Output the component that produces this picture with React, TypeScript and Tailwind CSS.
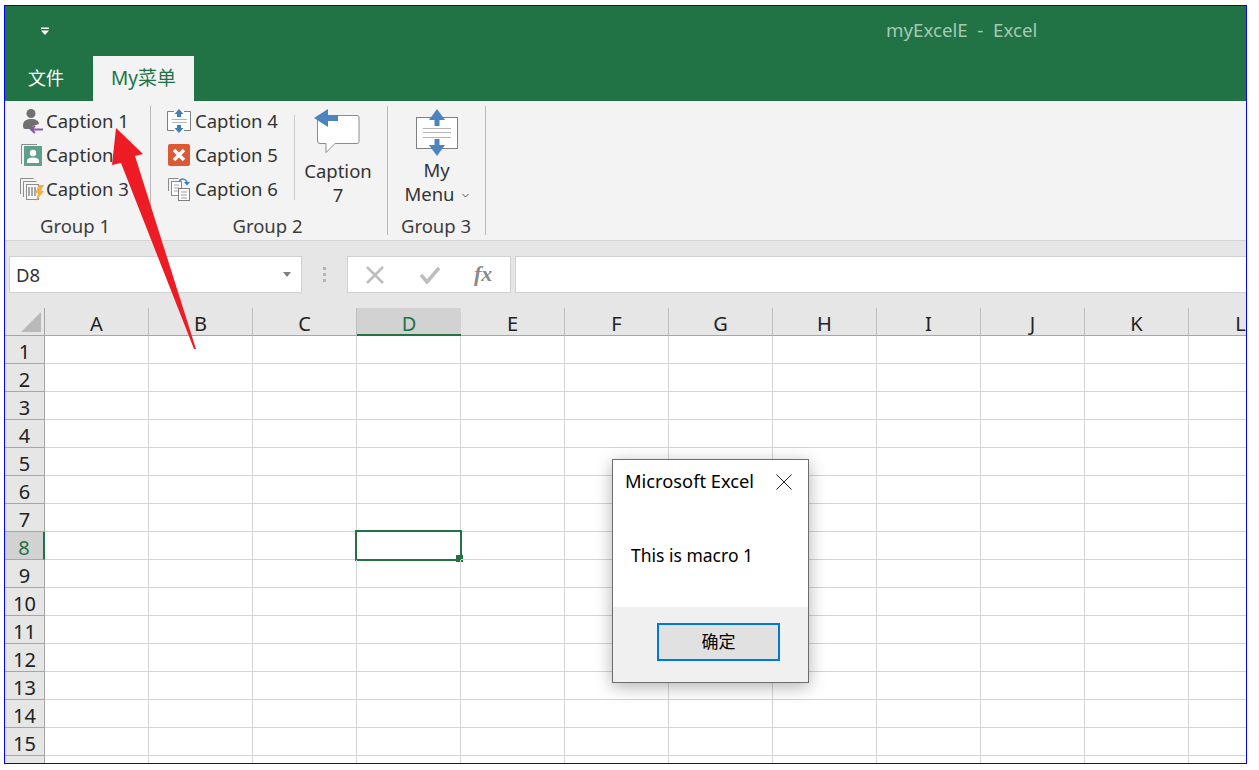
const uiFont = "font-['Noto_Sans','Noto_Sans_CJK_SC',sans-serif]";
const cols = ["A", "B", "C", "D", "E", "F", "G", "H", "I", "J", "K", "L"];
const rows = Array.from({ length: 16 }, (_, i) => i + 1);

function IconPerson() {
  return (
    <svg width="24" height="26" viewBox="0 0 24 26">
      <circle cx="11" cy="5.500" r="4.500" fill="#707070" />
      <path d="M3 18c0-5 3-7 8-7s8 2 8 5l-6 2-1 3H5c-1 0-2-1-2-3z" fill="#707070" />
      <path d="M11 21.500h12M15 18l-4 3.500 4 3.500" fill="none" stroke="#8a5aa8" strokeWidth="2" />
    </svg>
  );
}

function IconContact() {
  return (
    <svg width="24" height="24" viewBox="0 0 24 24">
      <path d="M1.500 21V1.500H17" fill="none" stroke="#8c8c8c" />
      <rect x="4" y="3" width="18" height="20" fill="#5f9f8b" />
      <circle cx="13" cy="10" r="3.200" fill="#fff" />
      <path d="M7 20v-2c0-2 2-3.500 6-3.500s6 1.500 6 3.500v2z" fill="#fff" />
    </svg>
  );
}

function IconBolt() {
  return (
    <svg width="26" height="26" viewBox="0 0 26 26">
      <path d="M1.500 18V2.500h13M4.500 21V5.500h13" fill="none" stroke="#8c8c8c" />
      <rect x="7.500" y="8.500" width="12" height="15" fill="#f7f7f7" stroke="#8c8c8c" />
      <path d="M10 11v9M13 11v9M16 11v9" stroke="#a8a8a8" strokeWidth="2" />
      <path d="M20 9h5l-3 6h3l-8 10 2-8h-3z" fill="#f0b14a" />
    </svg>
  );
}

function IconSpacing() {
  return (
    <svg width="26" height="26" viewBox="0 0 26 26">
      <rect x="2" y="3" width="22" height="19" fill="#fff" />
      <path d="M8 3.500H1.500v19H8M18 3.500h6.500v19H18" fill="none" stroke="#7f7f7f" />
      <path d="M6 11.500h15M6 14.500h15" stroke="#b5b5b5" />
      <path d="M13 1L8.500 6H11v3h4V6h2.500z" fill="#3f7fba" />
      <path d="M13 25l-4.500-5H11v-3h4v3h2.500z" fill="#3f7fba" />
    </svg>
  );
}

function IconClose() {
  return (
    <svg width="22" height="22" viewBox="0 0 22 22">
      <rect width="22" height="22" rx="2" fill="#dc5a33" />
      <path d="M6 6l10 10M16 6L6 16" stroke="#fff" strokeWidth="3.500" />
    </svg>
  );
}

function IconPages() {
  return (
    <svg width="24" height="24" viewBox="0 0 24 24">
      <path d="M1.500 14V1.500h10" fill="none" stroke="#8c8c8c" />
      <rect x="4.500" y="4.500" width="10" height="14" fill="#fff" stroke="#8c8c8c" />
      <path d="M7 8h5M7 11h5M7 14h5" stroke="#a8a8a8" />
      <rect x="11.500" y="11.500" width="11" height="12" fill="#fff" stroke="#7f7f7f" />
      <path d="M14 15h6M14 18h6M14 21h6" stroke="#9a9a9a" />
      <path d="M12 5c2-4 7-4 8 1" fill="none" stroke="#3f7fba" strokeWidth="1.500" />
      <path d="M17 5l3 3.500L23 5z" fill="#3f7fba" />
    </svg>
  );
}

function IconComment() {
  return (
    <svg width="48" height="46" viewBox="0 0 48 46">
      <path d="M4.500 10Q4.500 7.500 7 7.500H44q2 0 2 2v24q0 2-2 2H22l-9 9v-9H7q-2.500 0-2.500-2.500z" fill="#fff" stroke="#8c8c8c" />
      <path d="M1 10L15 1v6h10v6H15v6z" fill="#4b84bf" />
    </svg>
  );
}

function IconMenu() {
  return (
    <svg width="44" height="48" viewBox="0 0 44 48">
      <rect x="1.500" y="8.500" width="41" height="31" fill="#fff" stroke="#7f7f7f" />
      <path d="M8 19.500h28M8 23.500h28M8 28.500h28" stroke="#b5b5b5" />
      <path d="M22 0l-8 11h5.500v6h5v-6H30z" fill="#4b84bf" />
      <path d="M22 47l-8-11h5.500v-6h5v6H30z" fill="#4b84bf" />
    </svg>
  );
}

function SmallButton({ icon, label, iconBox }: { icon: React.ReactNode; label: string; iconBox: string }) {
  return (
    <div className="flex h-[30px] items-center">
      <div className={`flex items-center justify-center ${iconBox}`}>{icon}</div>
      <span className="text-[18.500px] leading-none whitespace-nowrap text-[#333]">{label}</span>
    </div>
  );
}

export default function App() {
  return (
    <div className={`relative h-[770px] w-[1259px] overflow-hidden bg-white pt-[5px] pl-[4px] ${uiFont}`}>
      <div className="flex h-[759px] w-[1243px] flex-col overflow-hidden border border-[#0000ff]">
        {/* title bar */}
        <div className="h-[95px] shrink-0 bg-[#217346]">
          <div className="flex h-[50px]">
            <svg className="mt-[21px] ml-[36px]" width="8" height="8" viewBox="0 0 8 8">
              <path d="M0 .5h8V2H0zM0 3.500h8L4 8z" fill="#fff" />
            </svg>
            <div className="ml-[837px] pt-[10px] text-[18.700px] leading-[28px] whitespace-pre text-[#a5c9b4]">myExcelE  -  Excel</div>
          </div>
          <div className="flex h-[45px]">
            <div className="flex w-[88px] items-center justify-center pr-[6px] text-[18px] text-white">文件</div>
            <div className="flex w-[101px] items-center justify-center bg-[#f3f3f3] text-[19px] text-[#217346]">My菜单</div>
          </div>
        </div>

        {/* ribbon */}
        <div className="flex h-[140px] shrink-0 border-b border-[#d4d4d4] bg-[#f3f3f3] pt-[5px]">
          <div className="flex h-[129px] w-[146px] flex-col border-r border-[#b8b8b8]">
            <SmallButton iconBox="ml-[13px] w-[28px]" icon={<IconPerson />} label="Caption 1" />
            <div className="mt-[4px]"><SmallButton iconBox="ml-[13px] w-[28px]" icon={<IconContact />} label="Caption 2" /></div>
            <div className="mt-[4px]"><SmallButton iconBox="ml-[12px] w-[29px]" icon={<IconBolt />} label="Caption 3" /></div>
            <div className="mt-auto pr-[5px] text-center text-[18.500px] leading-[18px] text-[#3c3c3c]">Group 1</div>
          </div>
          <div className="flex h-[129px] w-[237px] flex-col border-r border-[#b8b8b8]">
            <div className="flex h-[111px]">
              <div className="flex w-[143px] flex-col gap-[4px]">
                <SmallButton iconBox="ml-[13px] mr-[2px] w-[29px]" icon={<IconSpacing />} label="Caption 4" />
                <SmallButton iconBox="ml-[13px] mr-[2px] w-[29px]" icon={<IconClose />} label="Caption 5" />
                <SmallButton iconBox="ml-[13px] mr-[2px] w-[29px]" icon={<IconPages />} label="Caption 6" />
              </div>
              <div className="mt-[9px] h-[85px] w-px bg-[#cfcfcf]" />
              <div className="flex w-[86px] flex-col items-center text-[18.500px] leading-[24px] text-[#333]">
                <div className="mt-[2px] ml-[-2px] h-[46px]"><IconComment /></div>
                <div className="mt-[5px]">Caption</div>
                <div>7</div>
              </div>
            </div>
            <div className="mt-auto pr-[3px] text-center text-[18.500px] leading-[18px] text-[#3c3c3c]">Group 2</div>
          </div>
          <div className="flex h-[129px] w-[98px] flex-col border-r border-[#b8b8b8]">
            <div className="flex flex-col items-center text-[18.500px] leading-[24px] text-[#333]">
              <div className="mt-[3px] h-[48px]"><IconMenu /></div>
              <div className="mt-[1px]">My</div>
              <div className="flex items-center">
                Menu
                <svg className="mt-[2px] ml-[7px]" width="7" height="5" viewBox="0 0 7 5">
                  <path d="M.5 1l3 3 3-3" fill="none" stroke="#555" />
                </svg>
              </div>
            </div>
            <div className="mt-auto pr-[1px] text-center text-[18.500px] leading-[18px] text-[#3c3c3c]">Group 3</div>
          </div>
        </div>

        {/* formula bar */}
        <div className="flex h-[67px] shrink-0 items-start bg-[#e6e6e6] pt-[15px] pl-[4px]">
          <div className="flex h-[37px] w-[293px] items-center justify-between border border-[#d0d0d0] bg-white pr-[10px] pl-[6px] text-[18.500px] text-[#333]">
            <span>D8</span>
            <svg width="8" height="5" viewBox="0 0 8 5"><path d="M0 0h8L4 5z" fill="#7f7f7f" /></svg>
          </div>
          <div className="flex h-[37px] w-[45px] flex-col items-center justify-center gap-[3px]">
            <span className="h-[3px] w-[3px] bg-[#b5b5b5]" />
            <span className="h-[3px] w-[3px] bg-[#b5b5b5]" />
            <span className="h-[3px] w-[3px] bg-[#b5b5b5]" />
          </div>
          <div className="flex h-[37px] w-[164px] items-center border border-[#d0d0d0] bg-white">
            <svg className="ml-[18px]" width="18" height="18" viewBox="0 0 18 18">
              <path d="M1 1l16 16M17 1L1 17" stroke="#bdbdbd" strokeWidth="2.500" />
            </svg>
            <svg className="ml-[36px]" width="20" height="18" viewBox="0 0 20 18">
              <path d="M1 9l6 7L19 2" fill="none" stroke="#bdbdbd" strokeWidth="3.500" />
            </svg>
            <span className="mt-[-2px] ml-[34px] font-['Liberation_Serif',serif] text-[22px] font-bold text-[#8a8a8a] italic">fx</span>
          </div>
          <div className="ml-[4px] h-[37px] flex-1 border-y border-l border-[#d0d0d0] bg-white" />
        </div>

        {/* sheet */}
        <div className="grid flex-1 auto-rows-[28px] grid-cols-[40px_repeat(12,104px)] content-start overflow-hidden bg-white text-[20px] text-[#222]">
          <div className="border-r border-b border-[#a6a6a6] bg-[#e6e6e6]">
            <svg className="mt-[4px] ml-[16px]" width="20" height="20" viewBox="0 0 20 20"><path d="M20 0v20H0z" fill="#b9b9b9" /></svg>
          </div>
          {cols.map((c) =>
            c === "D" ? (
              <div key={c} className="flex items-center justify-center border-b-2 border-[#217346] bg-[#d2d2d2] pt-[5px] text-[#217346]">{c}</div>
            ) : (
              <div key={c} className="flex items-center justify-center border-r border-b border-r-[#bdbdbd] border-b-[#a6a6a6] bg-[#e6e6e6] pt-[4px]">{c}</div>
            ),
          )}
          {rows.map((r) => (
            <div key={r} className="contents">
              {r === 8 ? (
                <div className="flex items-center justify-center border-r-2 border-b border-r-[#217346] border-b-[#a6a6a6] bg-[#d2d2d2] pt-[4px] text-[#217346]">{r}</div>
              ) : (
                <div className="flex items-center justify-center border-r border-b border-[#a6a6a6] bg-[#e6e6e6] pt-[4px]">{r === 16 ? "" : r}</div>
              )}
              {cols.map((c) => (
                <div key={c} className="relative border-r border-b border-[#d4d4d4]">
                  {r === 8 && c === "D" && (
                    <div className="absolute -top-[2px] -left-[2px] h-[31px] w-[107px] border-2 border-[#217346]">
                      <span className="absolute -right-[3px] -bottom-[3px] h-[7px] w-[7px] bg-[#217346]" />
                    </div>
                  )}
                </div>
              ))}
            </div>
          ))}
        </div>
      </div>

      {/* message box */}
      <div className="absolute top-[459px] left-[612px] flex h-[224px] w-[197px] flex-col border border-[#6d6d6d] bg-white shadow-[0_4px_16px_rgba(0,0,0,0.3)]">
        <div className="flex items-start justify-between pt-[9px] pr-[16px] pl-[12px] text-[18.300px] leading-[24px] text-black">
          <span>Microsoft Excel</span>
          <svg className="mt-[5px]" width="16" height="16" viewBox="0 0 16 16">
            <path d="M.5.5l15 15M15.500.5l-15 15" stroke="#222" />
          </svg>
        </div>
        <div className="mt-[50px] pl-[18px] text-[17.500px] leading-[24px] text-black">This is macro 1</div>
        <div className="mt-auto flex h-[75px] justify-end bg-[#f0f0f0] pt-[16px] pr-[28px]">
          <div className="flex h-[38px] w-[123px] items-center justify-center border-2 border-[#0078d7] bg-[#e1e1e1] text-[17px] text-black">确定</div>
        </div>
      </div>

      {/* red annotation arrow */}
      <svg className="absolute top-0 left-0" width="1259" height="770" viewBox="0 0 1259 770">
        <polygon points="116,128 143,154 135,156 196,349 194,349 121,163 112,165" fill="#ed1c24" />
      </svg>
    </div>
  );
}
